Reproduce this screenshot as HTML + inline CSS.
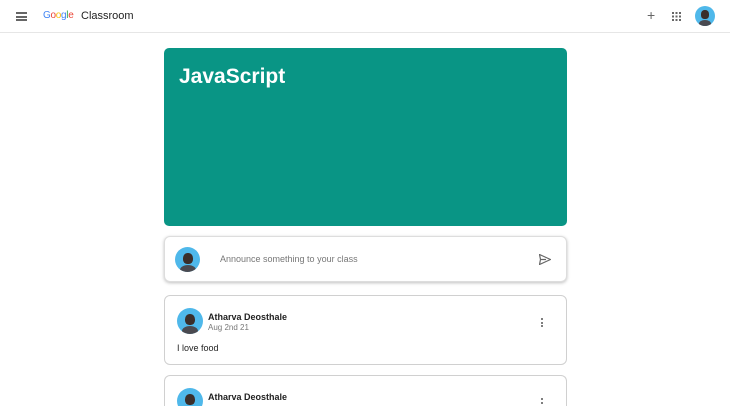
<!DOCTYPE html>
<html><head><style>
*{margin:0;padding:0;box-sizing:border-box}
html,body{width:730px;height:406px;overflow:hidden}
body{background:#fff;font-family:"Liberation Sans",Arial,sans-serif;position:relative}
.hdr{position:absolute;left:0;top:0;width:730px;height:33px;border-bottom:1px solid #e6e6e6}
.abs{position:absolute}
.av{position:absolute;border-radius:50%;background:#4fb8ea;overflow:hidden}
.av i{position:absolute;left:30%;top:22%;width:40%;height:45%;background:#3a2e2a;border-radius:45% 45% 40% 40%}
.av b{position:absolute;left:18%;top:70%;width:64%;height:40%;background:#4a4a50;border-radius:50% 50% 0 0}
.card{position:absolute;left:164px;width:403px;border:1px solid #d0d0d0;border-radius:6px;background:#fff;overflow:hidden}
.name{position:absolute;font-size:9px;font-weight:bold;color:#222}
.date{position:absolute;font-size:8px;color:#777}
.dots{position:absolute;width:2px}
.dots span{display:block;width:2px;height:2px;background:#555;border-radius:1px;margin-bottom:1.5px}
</style></head><body>
<div class="hdr">
 <div class="abs" style="left:16px;top:12px;width:11px;height:9px;border-top:2px solid #666;border-bottom:2px solid #666"><div style="margin-top:1.5px;height:2px;background:#666"></div></div>
 <div class="abs" style="left:43px;top:10px;font-size:10px;letter-spacing:-0.3px"><span style="color:#4285f4">G</span><span style="color:#ea4335">o</span><span style="color:#fbbc05">o</span><span style="color:#4285f4">g</span><span style="color:#34a853">l</span><span style="color:#ea4335">e</span></div>
 <div class="abs" style="left:81px;top:10px;font-size:11px;color:#222">Classroom</div>
 <div class="abs" style="left:647px;top:7px;font-size:14px;color:#666;font-weight:300">+</div>
 <svg class="abs" style="left:672px;top:12px" width="9" height="9"><g fill="#666"><rect x="0" y="0" width="2" height="2"/><rect x="3.5" y="0" width="2" height="2"/><rect x="7" y="0" width="2" height="2"/><rect x="0" y="3.5" width="2" height="2"/><rect x="3.5" y="3.5" width="2" height="2"/><rect x="7" y="3.5" width="2" height="2"/><rect x="0" y="7" width="2" height="2"/><rect x="3.5" y="7" width="2" height="2"/><rect x="7" y="7" width="2" height="2"/></g></svg>
 <div class="av" style="left:695px;top:6px;width:20px;height:20px"><i></i><b></b></div>
</div>
<div class="abs" style="left:164px;top:48px;width:403px;height:178px;background:#099585;border-radius:5px"></div>
<div class="abs" style="left:179px;top:65px;font-size:21px;font-weight:bold;color:#fff">JavaScript</div>
<div class="card" style="top:236px;height:46px;border-color:#ddd;box-shadow:0 1px 3px rgba(0,0,0,.25)">
 <div class="av" style="left:10px;top:10px;width:25px;height:25px"><i></i><b></b></div>
 <div class="abs" style="left:55px;top:17px;font-size:9px;color:#777">Announce something to your class</div>
 <svg class="abs" style="left:374px;top:17px" width="12" height="11" viewBox="0 0 12 11"><path d="M0.5 0.5L11.5 5.5L0.5 10.5L1.5 5.5Z M1.5 5.5H7" fill="none" stroke="#666" stroke-width="1.2"/></svg>
</div>
<div class="card" style="top:295px;height:70px">
 <div class="av" style="left:12px;top:12px;width:26px;height:26px"><i></i><b></b></div>
 <div class="name" style="left:43px;top:16px">Atharva Deosthale</div>
 <div class="date" style="left:43px;top:27px">Aug 2nd 21</div>
 <div class="dots" style="left:376px;top:22px"><span></span><span></span><span></span></div>
 <div class="abs" style="left:12px;top:47px;font-size:9px;color:#222">I love food</div>
</div>
<div class="card" style="top:375px;height:31px;border-bottom:none;border-radius:6px 6px 0 0">
 <div class="av" style="left:12px;top:12px;width:26px;height:26px"><i></i><b></b></div>
 <div class="name" style="left:43px;top:16px">Atharva Deosthale</div>
 <div class="dots" style="left:376px;top:22px"><span></span><span></span></div>
</div>
</body></html>
